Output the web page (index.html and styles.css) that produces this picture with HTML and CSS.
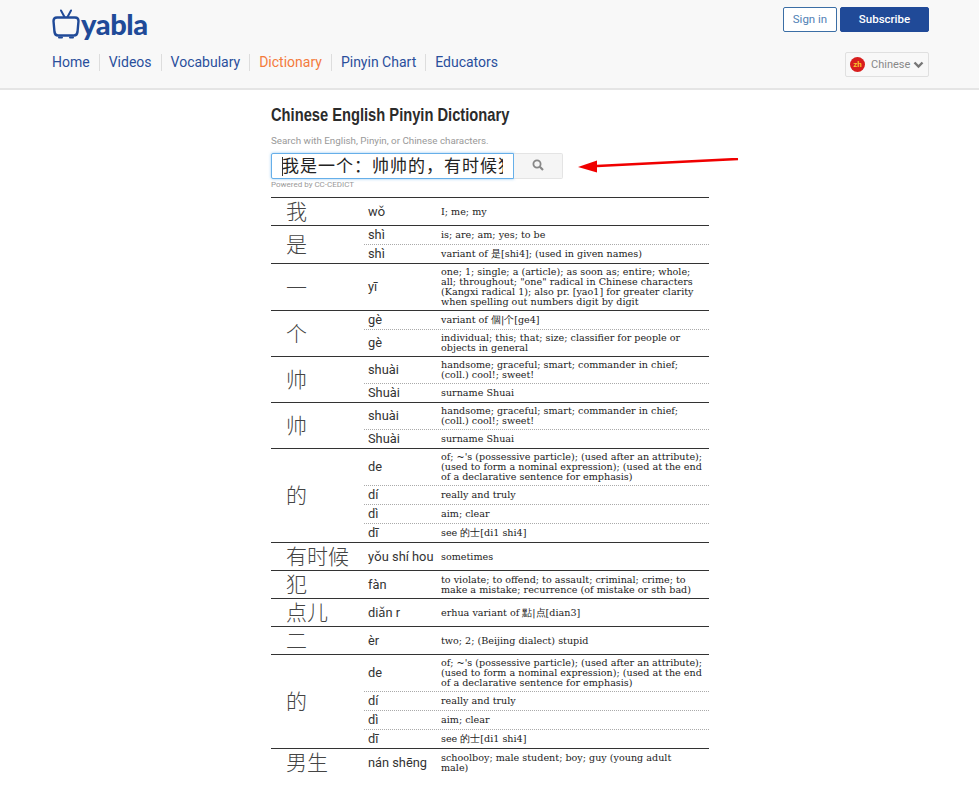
FILE: index.html
```html
<!DOCTYPE html>
<html lang="en">
<head>
<meta charset="utf-8">
<title>Chinese English Pinyin Dictionary</title>
<link rel="stylesheet" href="styles.css">
</head>
<body>
<header class="site-header">
  <div class="header-left">
    <a class="logo" href="#">
      <svg class="logo-tv" width="28" height="30" viewBox="0 0 28 30" aria-hidden="true">
        <path d="M9 1.5 L12.5 8 M19 1.5 L15.5 8" fill="none" stroke="#204a98" stroke-width="2" stroke-linecap="round"/>
        <path d="M5 8.5 H23 Q26.5 8.5 26.5 12 L25.5 23 Q25 26.5 22 26.5 H6 Q3 26.5 2.5 23 L1.5 12 Q1.5 8.5 5 8.5 Z" fill="none" stroke="#204a98" stroke-width="2.4"/>
        <path d="M7 28.5 h3 M18 28.5 h3" stroke="#204a98" stroke-width="2" stroke-linecap="round"/>
      </svg>
      <span class="logo-word">yabla</span>
    </a>
    <nav class="main-nav">
      <a href="#">Home</a>
      <a href="#">Videos</a>
      <a href="#">Vocabulary</a>
      <a href="#" class="active">Dictionary</a>
      <a href="#">Pinyin Chart</a>
      <a href="#">Educators</a>
    </nav>
  </div>
  <div class="header-right">
    <div class="account">
      <a class="btn btn-outline" href="#">Sign in</a>
      <a class="btn btn-solid" href="#">Subscribe</a>
    </div>
    <div class="lang">
      <span class="lang-flag">zh</span>
      <span class="lang-name">Chinese</span>
      <svg class="lang-chev" width="11" height="8" viewBox="0 0 11 8" aria-hidden="true"><path d="M1.5 1.5 L5.5 5.5 L9.5 1.5" fill="none" stroke="#777" stroke-width="2.4"/></svg>
    </div>
  </div>
</header>

<main class="content">
  <h1>Chinese English Pinyin Dictionary</h1>
  <p class="hint">Search with English, Pinyin, or Chinese characters.</p>
  <form class="search">
    <input class="search-input" type="text" value="我是一个：帅帅的，有时候犯点儿二的男生">
    <span class="caret"></span>
    <button class="search-btn" type="button" aria-label="Search">
      <svg width="12" height="12" viewBox="0 0 12 12" aria-hidden="true"><circle cx="5" cy="5" r="3.6" fill="none" stroke="#888" stroke-width="1.8"/><path d="M7.8 7.8 L11 11" stroke="#888" stroke-width="2.2"/></svg>
    </button>
  </form>
  <p class="powered">Powered by CC-CEDICT</p>

  <svg class="arrow" width="162" height="20" viewBox="0 0 162 20" aria-hidden="true">
    <path d="M161 1 L20 8" stroke="#f00000" stroke-width="2.6" fill="none"/>
    <path d="M1 9 L20 2.5 L20 14.5 Z" fill="#f00000"/>
  </svg>

  <div class="dict">
    <section class="entry"><div class="hanzi">我</div><div class="senses">
      <div class="sense"><div class="py">wǒ</div><div class="def">I; me; my</div></div>
    </div></section>
    <section class="entry"><div class="hanzi">是</div><div class="senses">
      <div class="sense"><div class="py">shì</div><div class="def">is; are; am; yes; to be</div></div>
      <div class="sense"><div class="py">shì</div><div class="def">variant of 是[shi4]; (used in given names)</div></div>
    </div></section>
    <section class="entry"><div class="hanzi">一</div><div class="senses">
      <div class="sense"><div class="py">yī</div><div class="def">one; 1; single; a (article); as soon as; entire; whole; all; throughout; "one" radical in Chinese characters (Kangxi radical 1); also pr. [yao1] for greater clarity when spelling out numbers digit by digit</div></div>
    </div></section>
    <section class="entry"><div class="hanzi">个</div><div class="senses">
      <div class="sense"><div class="py">gè</div><div class="def">variant of 個|个[ge4]</div></div>
      <div class="sense"><div class="py">gè</div><div class="def">individual; this; that; size; classifier for people or objects in general</div></div>
    </div></section>
    <section class="entry"><div class="hanzi">帅</div><div class="senses">
      <div class="sense"><div class="py">shuài</div><div class="def">handsome; graceful; smart; commander in chief; (coll.) cool!; sweet!</div></div>
      <div class="sense"><div class="py">Shuài</div><div class="def">surname Shuai</div></div>
    </div></section>
    <section class="entry"><div class="hanzi">帅</div><div class="senses">
      <div class="sense"><div class="py">shuài</div><div class="def">handsome; graceful; smart; commander in chief; (coll.) cool!; sweet!</div></div>
      <div class="sense"><div class="py">Shuài</div><div class="def">surname Shuai</div></div>
    </div></section>
    <section class="entry"><div class="hanzi">的</div><div class="senses">
      <div class="sense"><div class="py">de</div><div class="def">of; ~'s (possessive particle); (used after an attribute); (used to form a nominal expression); (used at the end of a declarative sentence for emphasis)</div></div>
      <div class="sense"><div class="py">dí</div><div class="def">really and truly</div></div>
      <div class="sense"><div class="py">dì</div><div class="def">aim; clear</div></div>
      <div class="sense"><div class="py">dī</div><div class="def">see 的士[di1 shi4]</div></div>
    </div></section>
    <section class="entry"><div class="hanzi">有时候</div><div class="senses">
      <div class="sense"><div class="py">yǒu shí hou</div><div class="def">sometimes</div></div>
    </div></section>
    <section class="entry"><div class="hanzi">犯</div><div class="senses">
      <div class="sense"><div class="py">fàn</div><div class="def">to violate; to offend; to assault; criminal; crime; to make a mistake; recurrence (of mistake or sth bad)</div></div>
    </div></section>
    <section class="entry"><div class="hanzi">点儿</div><div class="senses">
      <div class="sense"><div class="py">diǎn r</div><div class="def">erhua variant of 點|点[dian3]</div></div>
    </div></section>
    <section class="entry"><div class="hanzi">二</div><div class="senses">
      <div class="sense"><div class="py">èr</div><div class="def">two; 2; (Beijing dialect) stupid</div></div>
    </div></section>
    <section class="entry"><div class="hanzi">的</div><div class="senses">
      <div class="sense"><div class="py">de</div><div class="def">of; ~'s (possessive particle); (used after an attribute); (used to form a nominal expression); (used at the end of a declarative sentence for emphasis)</div></div>
      <div class="sense"><div class="py">dí</div><div class="def">really and truly</div></div>
      <div class="sense"><div class="py">dì</div><div class="def">aim; clear</div></div>
      <div class="sense"><div class="py">dī</div><div class="def">see 的士[di1 shi4]</div></div>
    </div></section>
    <section class="entry"><div class="hanzi">男生</div><div class="senses">
      <div class="sense"><div class="py">nán shēng</div><div class="def">schoolboy; male student; boy; guy (young adult<br>male)</div></div>
    </div></section>
  </div>
</main>
</body>
</html>
```
FILE: styles.css
```css
* { box-sizing: border-box; }
html, body { margin: 0; padding: 0; background: #fff; }
body { font-family: Roboto, "Noto Sans CJK SC", sans-serif; color: #333; height: 802px; overflow: hidden; }
a { text-decoration: none; }

.site-header {
  display: flex;
  justify-content: space-between;
  height: 90px;
  padding: 7px 50px 0 52px;
  background: #f8f8f8;
  border-bottom: 2px solid #e5e5e5;
}
.logo { display: flex; align-items: center; height: 34px; color: #204a98; }
.logo-tv { display: block; }
.logo-word {
  font-family: Lato, sans-serif;
  font-weight: 900;
  font-size: 29px;
  line-height: 34px;
  letter-spacing: -0.4px;
  margin-left: 1px;
}
.main-nav { display: flex; margin-top: 13px; }
.main-nav a {
  font-size: 14px;
  line-height: 17px;
  color: #2a4f9c;
  padding: 0 9px;
  border-left: 1px solid #dddddd;
}
.main-nav a:first-child { padding-left: 0; border-left: 0; }
.main-nav a.active { color: #f47b3c; }

.header-right { display: flex; flex-direction: column; align-items: flex-end; }
.account { display: flex; gap: 3px; }
.btn {
  display: block;
  height: 25px;
  font-size: 11.5px;
  line-height: 23px;
  text-align: center;
  border-radius: 2px;
  border: 1px solid #3b6ea5;
}
.btn-outline { width: 54px; color: #4f7fb5; background: #fff; }
.btn-solid { width: 89px; color: #fff; font-weight: 500; background: #204a98; border-color: #204a98; }
.lang {
  display: flex;
  align-items: center;
  width: 84px;
  height: 25px;
  margin-top: 20px;
  padding-left: 4px;
  border: 1px solid #e0e0e0;
  border-radius: 2px;
}
.lang-flag {
  width: 15px;
  height: 15px;
  border-radius: 50%;
  background: #d81e1e;
  color: #f7c52e;
  font-size: 8px;
  font-weight: 700;
  line-height: 15px;
  text-align: center;
}
.lang-name { margin-left: 6px; font-size: 11px; color: #888; }
.lang-chev { margin-left: 3px; }

.content { position: relative; width: 438px; margin-left: 271px; padding-top: 14px; }
h1 {
  margin: 0;
  font-family: "Liberation Sans", sans-serif;
  font-size: 19px;
  line-height: 22px;
  font-weight: 700;
  color: #2b2b2b;
  white-space: nowrap;
  transform: scaleX(.773);
  transform-origin: left center;
}
.hint { margin: 9px 0 0; font-size: 9.8px; line-height: 12px; color: #999; }
.search { position: relative; display: flex; margin-top: 6px; width: 292px; height: 26px; }
.search-input {
  width: 243px;
  height: 26px;
  padding: 0 10px 3px;
  border: 1px solid #66afe9;
  border-radius: 2px 0 0 2px;
  outline: 0;
  box-shadow: 0 0 3px rgba(102,175,233,.7);
  font-family: "Noto Sans CJK SC", sans-serif;
  font-size: 17px;
  font-weight: 400;
  letter-spacing: 1px;
  color: #222;
}
.caret { position: absolute; left: 11px; top: 4px; width: 1px; height: 19px; background: #333; }
.search-btn {
  width: 49px;
  height: 26px;
  padding: 0;
  background: #f5f5f5;
  border: 1px solid #e4e4e4;
  border-left: 0;
  border-radius: 0 2px 2px 0;
}
.powered { margin: 1px 0 0; font-size: 8px; line-height: 10px; color: #999; }
.arrow { position: absolute; left: 306px; top: 68px; }

.dict { margin-top: 7px; }
.entry { display: flex; border-top: 1px solid #333; }
.hanzi {
  flex: 0 0 93px;
  display: flex;
  align-items: center;
  min-height: 27px;
  padding: 0 0 2px 15px;
  font-family: "Noto Sans CJK SC", sans-serif;
  font-weight: 300;
  font-size: 21px;
  line-height: 25px;
  color: #444;
  white-space: nowrap;
}
.senses { flex: 1; min-width: 0; display: flex; flex-direction: column; }
.sense { flex: 1 0 auto; display: flex; align-items: center; min-height: 18px; }
.sense + .sense { min-height: 19px; border-top: 1px dotted #aaa; }
.py { flex: 0 0 73px; padding-left: 4px; font-size: 12.8px; line-height: 16px; color: #333; white-space: nowrap; }
.def {
  flex: 1;
  padding: 3px 6px 3px 4px;
  font-family: "DejaVu Serif", serif;
  font-size: 9.6px;
  line-height: 10px;
  color: #222;
}
```
